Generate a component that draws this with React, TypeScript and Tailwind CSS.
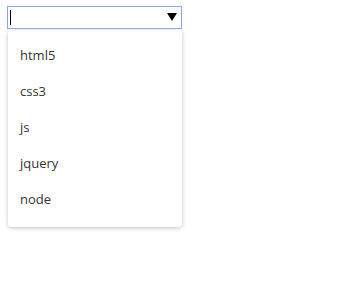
const options = ["html5", "css3", "js", "jquery", "node"];

export default function App() {
  return (
    <div className="w-[356px] h-[292px] bg-white pl-[7px] pt-[6px] font-['Segoe_UI','Open_Sans',sans-serif]">
      <div className="relative w-[175px] h-[23px] border border-[#86a8e7] bg-white flex items-center">
        <span className="ml-[2px] w-[1px] h-[15px] bg-black" />
        <span className="absolute right-[4px] top-[6px] w-0 h-0 border-l-[5px] border-r-[5px] border-t-[8px] border-l-transparent border-r-transparent border-t-black" />
      </div>
      <ul className="mt-[1px] w-[174px] ml-[1px] rounded-[4px] bg-white pt-[8px] pb-[9px] shadow-[0_1px_4px_rgba(0,0,0,0.25)]">
        {options.map((o) => (
          <li key={o} className="h-[36px] flex items-center pl-[12px] text-[13px] text-[#333]">
            {o}
          </li>
        ))}
      </ul>
    </div>
  );
}
